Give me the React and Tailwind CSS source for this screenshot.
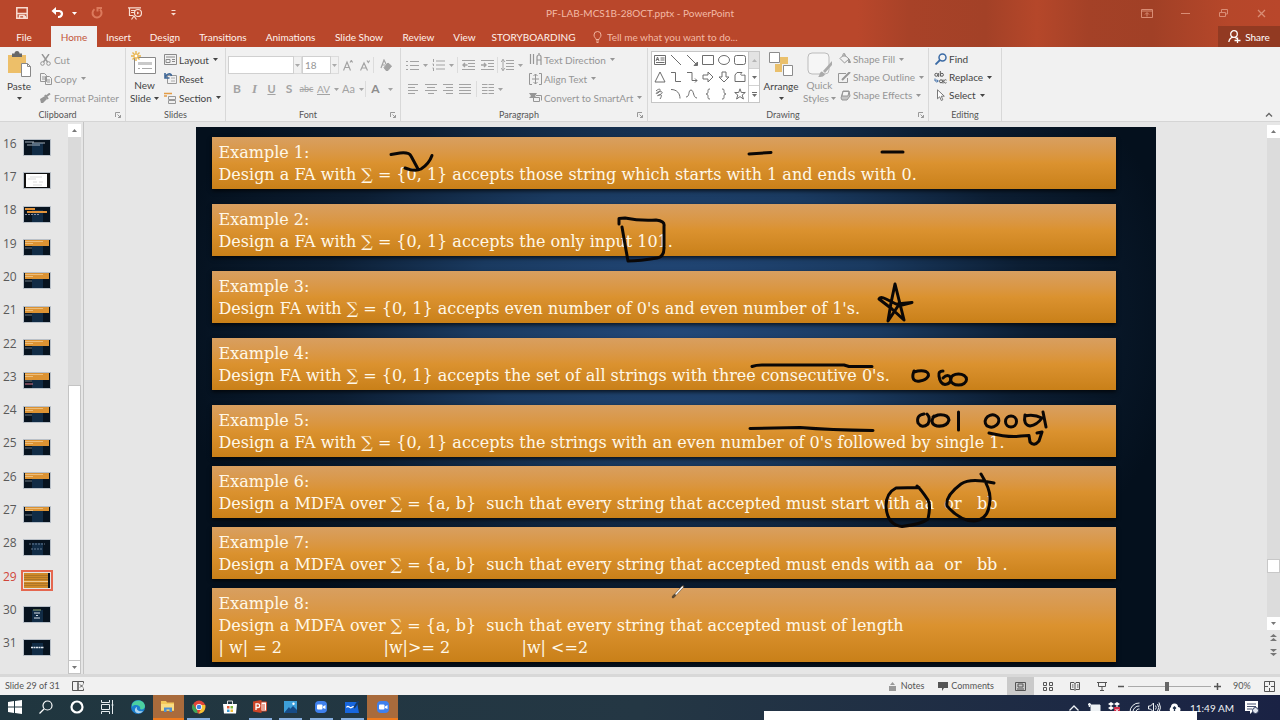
import React from "react";

const examples = [
  { gap: "", lines: ["Example 1:", "Design a FA with ∑ = {0, 1} accepts those string which starts with 1 and ends with 0."] },
  { gap: "mt-[15px]", lines: ["Example 2:", "Design a FA with ∑ = {0, 1} accepts the only input 101."] },
  { gap: "mt-[15px]", lines: ["Example 3:", "Design FA with ∑ = {0, 1} accepts even number of 0's and even number of 1's."] },
  { gap: "mt-[15px]", lines: ["Example 4:", "Design FA with ∑ = {0, 1} accepts the set of all strings with three consecutive 0's."] },
  { gap: "mt-[15px]", lines: ["Example 5:", "Design a FA with ∑ = {0, 1} accepts the strings with an even number of 0's followed by single 1."] },
  { gap: "mt-[9px]", lines: ["Example 6:", "Design a MDFA over ∑ = {a, b}  such that every string that accepted must start with aa  or   bb"] },
  { gap: "mt-[9px]", lines: ["Example 7:", "Design a MDFA over ∑ = {a, b}  such that every string that accepted must ends with aa  or   bb ."] },
  { gap: "mt-[9px]", lines: ["Example 8:", "Design a MDFA over ∑ = {a, b}  such that every string that accepted must of length"], lengths: ["| w| = 2", "|w|>= 2", "|w| <=2"] },
];

const tabs = [
  ["Insert", "w-[43px]"],
  ["Design", "w-[50px]"],
  ["Transitions", "w-[66px]"],
  ["Animations", "w-[69px]"],
  ["Slide Show", "w-[68px]"],
  ["Review", "w-[51px]"],
  ["View", "w-[41px]"],
  ["STORYBOARDING", "w-[97px]"],
];

const thumbs = [
  [16, "text"], [17, "white"], [18, "title"], [19, "band"], [20, "band"], [21, "band"], [22, "band"], [23, "tall"],
  [24, "band"], [25, "band"], [26, "band"], [27, "thin"], [28, "center"], [29, "full"], [30, "stack"], [31, "end"],
];

function Svg({ w = 14, h = 14, vb, className = "", children }) {
  return (
    <svg
      width={w}
      height={h}
      viewBox={vb || `0 0 ${w} ${h}`}
      fill="none"
      stroke="currentColor"
      strokeWidth="1"
      className={"shrink-0 " + className}
      aria-hidden="true"
    >
      {children}
    </svg>
  );
}

function Caret({ className = "" }) {
  return (
    <Svg w={5} h={3} className={className}>
      <path d="M0 0h5L2.500 3z" fill="currentColor" stroke="none" />
    </Svg>
  );
}

function Thumb({ kind }) {
  return (
    <svg width="26" height="15" viewBox="0 0 26 15" aria-hidden="true" className="block">
      <rect width="26" height="15" fill="#07131f" />
      <rect x="8" y="3" width="11" height="12" fill="#143350" opacity="0.8" />
      {kind === "text" && <path d="M1 2h9M3 5h13M8 3h13" stroke="#c9d3dc" strokeWidth="0.800" />}
      {kind === "white" && (
        <g>
          <rect width="26" height="15" fill="#111" />
          <rect x="2" y="1" width="21" height="13" fill="#fff" />
          <path d="M6 4h12M4 6h8M9 9h4M15 9h4M9 12h9" stroke="#ccc" strokeWidth="0.700" />
        </g>
      )}
      {kind === "title" && (
        <g>
          <path d="M1 2h10" stroke="#e0933b" strokeWidth="2" />
          <path d="M3 5h20" stroke="#e0933b" strokeWidth="2" />
          <path d="M1 7.500h14" stroke="#aab" strokeWidth="0.800" strokeDasharray="2 1" />
        </g>
      )}
      {(kind === "band" || kind === "tall" || kind === "thin") && (
        <g>
          <rect x="1" y="0" width="24" height={kind === "tall" ? 7 : kind === "thin" ? 4 : 6} fill="#dc9333" />
          <path d="M1 1.500h18M1 3.500h8" stroke="#f0c88e" strokeWidth="0.800" />
          <path d="M1 8h7" stroke="#aeb8c2" strokeWidth="0.600" />
          {kind === "tall" && <path d="M1 11h8" stroke="#d9778b" strokeWidth="1" />}
        </g>
      )}
      {kind === "center" && <path d="M5 4h16M7 9h12" stroke="#7d93a8" strokeWidth="0.800" strokeDasharray="2 1" />}
      {kind === "full" && (
        <g>
          <rect width="24" height="15" fill="#d08a2a" />
          <path d="M0 2.500h24M0 4.500h24M0 6.500h24M0 10.500h24M0 12.500h24" stroke="#8c6324" strokeWidth="0.500" />
          <path d="M0 8.500h24" stroke="#f5dcb0" strokeWidth="0.800" />
        </g>
      )}
      {kind === "stack" && (
        <g>
          <path d="M9 3h8" stroke="#9ab07a" strokeWidth="1" />
          <path d="M10 6h6M12 8.500h2M10 11h6" stroke="#d5dde5" strokeWidth="1" />
        </g>
      )}
      {kind === "end" && <path d="M7 7.500h13" stroke="#dfe6ee" strokeWidth="1.500" strokeDasharray="2 0.500" />}
    </svg>
  );
}

function Group({ label, width, launcher, children }) {
  return (
    <section aria-label={label} className={"flex shrink-0 flex-col border-r border-[#d8d8d8] " + width}>
      <div className="flex h-[61px] pt-[2px]">{children}</div>
      <div className="flex h-3 items-center">
        <span className="flex-1 text-center text-[9px] leading-3 text-[#555]">{label}</span>
        {launcher && (
          <button aria-label={label + " options"} className="mr-1 text-[#999]">
            <Svg w={6} h={6}><path d="M.5 5V.500H5M2.500 2.500l3 3M5.500 3v2.500H3" /></Svg>
          </button>
        )}
      </div>
    </section>
  );
}

function Row({ icon, label, dim, caret, tight }) {
  return (
    <button className={"flex items-center whitespace-nowrap " + (tight ? "h-[18px] " : "h-[19px] ") + (dim ? "text-[#969696]" : "text-[#444]")}>
      <span className="flex w-[15px] justify-center">{icon}</span>
      <span className="ml-[1px] text-[10px] leading-4">{label}</span>
      {caret && <Caret className="ml-1" />}
    </button>
  );
}

function Tool({ label, width, children }) {
  return (
    <button aria-label={label} className={"flex h-5 shrink-0 items-center justify-center gap-1 text-[#a3a3a3] " + width}>
      {children}
    </button>
  );
}

function Sep() {
  return <span className="h-4 w-px shrink-0 bg-[#dcdcdc]" />;
}

function Align({ lines }) {
  return (
    <Svg w={12} h={10}>
      {lines.map(([a, b], i) => <path key={i} d={`M${a} ${i * 3 + 0.5}H${b}`} />)}
    </Svg>
  );
}

const shapes = [
  ["Text box", <g><path d="M.5 1.500h11v9H.5zM6.500 4h4M6.500 6h4M2 8.500h8.500" /><path d="M2 7l1.500-4L5 7M2.500 5.500h2" /></g>],
  ["Line", <path d="M1 1l10 10" />],
  ["Arrow", <g><path d="M1 1l10 10" /><path d="M11.500 11.500V8l-3.500 3.500z" fill="currentColor" /></g>],
  ["Rectangle", <path d="M.5 1.500h11v9H.5z" />],
  ["Oval", <ellipse cx="6" cy="6" rx="5.500" ry="4.500" />],
  ["Rounded rectangle", <rect x=".5" y="1.500" width="11" height="9" rx="2" />],
  ["Triangle", <path d="M6 1l5 10H1z" />],
  ["Elbow connector", <path d="M1 1.500h4.500v9H11" />],
  ["Elbow arrow", <path d="M1 1.500h5v8h5M9 7.500l2 2-2 2" />],
  ["Right arrow", <path d="M1 4h5V1l5 5-5 5V8H1z" />],
  ["Down arrow", <path d="M4 1v5H1l5 5 5-5H8V1z" />],
  ["Freeform", <path d="M3 1.500h5c-3 3 0 3 3 2.500v6.500H1V4z" />],
  ["Scribble", <path d="M2 3c3-3 6-2 3 1S1 5 4 4s6 0 3 2-5 2-2 1 3 1 1 4" />],
  ["Curve", <path d="M1 1.500c6 0 9 4 9 9" />],
  ["Wave", <path d="M0 9c4 0 2-7 5-7s2 8 6 8" />],
  ["Left brace", <path d="M8 1c-2 0-2 .500-2 2.500S5 6 4 6c1 0 2 .500 2 2.500s0 2.500 2 2.500" />],
  ["Right brace", <path d="M4 1c2 0 2 .500 2 2.500S7 6 8 6c-1 0-2 .500-2 2.500s0 2.500-2 2.500" />],
  ["Star", <path d="M6 .800l1.300 3.700h4L8.200 7l1.200 4L6 8.600 2.600 11l1.200-4L.7 4.500h4z" />],
];

function TitleBar() {
  return (
    <div className="relative flex h-[26px] items-center justify-between text-[#f8ddd2]">
      <div className="flex items-center pl-4">
        <button aria-label="Save" className="flex w-[26px]">
          <Svg w={12} h={12}><path d="M.8.800h10.400v10.400H.8zM1 6.500h10M3.500 11V8.500h4.500V11" strokeWidth="1.500" /><path d="M8 9h1.500v2H8z" fill="currentColor" /></Svg>
        </button>
        <button aria-label="Undo" className="ml-[9px] flex items-center gap-2 text-white">
          <Svg w={13} h={12}><path d="M5 0v3h3.500C14 3.500 13 11.500 7 11V9c3 .300 4-3.500 1-4H5v3L.5 4z" fill="currentColor" stroke="none" /></Svg>
          <Caret />
        </button>
        <button aria-label="Redo" className="ml-[14px] flex text-[#dc7a5c]">
          <Svg w={12} h={12}><path d="M3.500 2.200A4.500 4.500 0 1 0 9 2.500M6.500 4.500V1H11" strokeWidth="2" /></Svg>
        </button>
        <button aria-label="Start slide show" className="ml-[25px] flex">
          <Svg w={14} h={13}><path d="M0 .8h13M1.500 1v7.500h4M3 3.500h4M3 5.500h3M6 9l-2.500 3.500M6 9l2.500 3.500" strokeWidth="1.200" /><circle cx="10" cy="6" r="3.500" strokeWidth="1.200" /><path d="M9 4.500v3L11.500 6z" fill="currentColor" stroke="none" /></Svg>
        </button>
        <button aria-label="Customize quick access toolbar" className="ml-[29px] flex">
          <Svg w={5} h={6}><path d="M.5.500h4" /><path d="M0 3h5L2.500 5.500z" fill="currentColor" stroke="none" /></Svg>
        </button>
      </div>
      <h1 className="absolute left-1/2 -translate-x-1/2 whitespace-nowrap text-[10px] leading-4 text-[#f3baa6]">
        PF-LAB-MCS1B-28OCT.pptx - PowerPoint
      </h1>
      <div className="flex w-[152px] text-[#d98d75]">
        <button aria-label="Ribbon display options" className="flex w-[38px] justify-center"><Svg w={12} h={9}><path d="M.5.500h11v8H.5zM.5 2h11M6 7.500V4M4 5.500l2-2 2 2" /></Svg></button>
        <button aria-label="Minimize" className="flex w-[38px] items-center justify-center"><Svg w={9} h={3}><path d="M0 1.500h9" /></Svg></button>
        <button aria-label="Restore" className="flex w-[38px] justify-center"><Svg w={9} h={9}><path d="M.5 3.500h6v4h-6zM2.500 3V.500h6V5H7" /></Svg></button>
        <button aria-label="Close" className="flex w-[38px] justify-center"><Svg w={9} h={9}><path d="M1 1l7 7M8 1L1 8" strokeWidth="1.300" /></Svg></button>
      </div>
    </div>
  );
}

function TabBar() {
  return (
    <nav aria-label="Ribbon tabs" className="flex h-[21px] items-stretch text-[10px] leading-4 text-[#fff3ed]">
      <button className="w-12">File</button>
      <button className="ml-[3px] w-[46px] bg-[#f1f1f1] text-[#c2563a]">Home</button>
      {tabs.map(([t, w]) => <button key={t} className={"whitespace-nowrap text-center " + w}>{t}</button>)}
      <label className="ml-[11px] flex flex-1 items-center gap-[5px]">
        <Svg w={9} h={12} className="text-[#f0b39d]"><path d="M3 8.500C3 7 1 6.500 1 4a3.500 3.500 0 0 1 7 0c0 2.500-2 3-2 4.500zM3 10h3M3.500 11.500h2" /></Svg>
        <input aria-label="Tell me what you want to do" placeholder="Tell me what you want to do..." className="w-44 bg-transparent text-[10px] leading-4 outline-none placeholder:text-[#f3baa6]" />
      </label>
      <button className="flex w-[62px] items-center justify-center gap-1 bg-[#923a22] text-white">
        <Svg w={13} h={13}><circle cx="6" cy="4" r="3.300" strokeWidth="1.300" /><path d="M.8 12c.500-3 2-4.500 4-4.700M7 7.500l2 1M6.500 10.500h6M9.500 7.500v5.500" strokeWidth="1.300" /></Svg>
        Share
      </button>
    </nav>
  );
}

function Ribbon() {
  return (
    <div className="flex h-[75px] items-stretch border-b border-[#d5d5d5] bg-[#f1f1f1] pt-px">
      <Group label="Clipboard" width="w-[126px]" launcher>
        <button className="flex w-[38px] shrink-0 flex-col items-center text-[10px] leading-3 text-[#444]">
          <Svg w={25} h={27} className="mt-[1px]">
            <path d="M1 4h18v18H1z" fill="#edbf69" stroke="none" />
            <path d="M5 2.500h2.500a2.500 2.500 0 0 1 5 0H15V6H5z" fill="#686868" stroke="none" />
            <path d="M14.500 12.500h6l3 3v10h-9z" fill="#fff" stroke="#888" /><path d="M20.500 12.500v3h3" stroke="#888" />
          </Svg>
          <span className="mt-[2px]">Paste</span>
          <Caret className="mt-[5px]" />
        </button>
        <div className="flex flex-col">
          <Row dim label="Cut" icon={<Svg w={11} h={12}><path d="M2 0l5.500 8M9 0L3.500 8" strokeWidth="1.400" /><circle cx="2.500" cy="9.500" r="1.800" /><circle cx="8.500" cy="9.500" r="1.800" /></Svg>} />
          <Row dim caret label="Copy" icon={<Svg w={12} h={12}><path d="M.5.500h4l2 2v6h-6zM5.500 3.500h4l2 2v6h-6zM2 4h3M2 6h3M7 7h3M7 9h3" /></Svg>} />
          <Row dim label="Format Painter" icon={<Svg w={11} h={10}><path d="M0 6l5-3 2 3-4 4H1z" fill="currentColor" stroke="none" /><path d="M6 3.500L10 .5M5 2l3 4" strokeWidth="2" /></Svg>} />
        </div>
      </Group>
      <Group label="Slides" width="w-[100px]">
        <button className="flex w-[37px] shrink-0 flex-col items-center whitespace-nowrap text-[10px] leading-[13px] text-[#444]">
          <Svg w={27} h={26} className="mt-[1px]">
            <path d="M3.500 6.500h21v16h-21z" fill="#fff" stroke="#888" />
            <path d="M7 11h14v3H7z" fill="#c9c9c9" stroke="none" /><path d="M7 17.500h2M11 17.500h10" stroke="#aaa" />
            <path d="M5 0v10M0 5h10M1.500 1.500l7 7M8.500 1.500l-7 7" stroke="#e9b44c" strokeWidth="1.400" /><circle cx="5" cy="5" r="2" fill="#fff" stroke="#e9b44c" />
          </Svg>
          <span className="mt-[2px]">New</span>
          <span className="flex items-center gap-[3px]">Slide <Caret /></span>
        </button>
        <div className="flex flex-col">
          <Row caret label="Layout" icon={<Svg w={13} h={11} className="text-[#8a8a8a]"><path d="M.5.500h12v10H.5zM2 3h9M2 5.500h4v3H2zM8 5.500h3M8 7.500h3" /></Svg>} />
          <Row label="Reset" icon={<Svg w={13} h={12}><path d="M3.500 2.500h9v8h-9z" stroke="#999" /><path d="M7 5h4M7 8h4" stroke="#aaa" /><path d="M1 0v5h4.500M1.500 4.500C2.500 0 7 0 7.500 3" stroke="#3f6797" strokeWidth="1.600" /></Svg>} />
          <Row caret label="Section" icon={<Svg w={13} h={12}><path d="M0 1.500h8M0 4h3" stroke="#e39c45" strokeWidth="1.600" /><path d="M4.500 4.500h7v3h-7zM4.500 8.500h7v3h-7z" stroke="#999" /></Svg>} />
        </div>
      </Group>
      <Group label="Font" width="w-[175px]" launcher>
        <div className="flex flex-col gap-1 pl-[2px] pt-[5px]">
          <div className="flex items-center">
            <input aria-label="Font name" className="h-[18px] w-[66px] border border-[#d0d0d0] bg-white px-1 text-[10px]" />
            <span className="flex h-[18px] w-2 items-center justify-center border-y border-r border-[#dcdcdc] text-[#aaa]"><Caret /></span>
            <select aria-label="Font size" defaultValue="18" className="h-[18px] w-[29px] appearance-none border border-[#d0d0d0] bg-white pl-[2px] text-[10px] leading-4 text-[#969696]"><option>18</option></select>
            <span className="flex h-[18px] w-2 items-center justify-center border-y border-r border-[#dcdcdc] text-[#aaa]"><Caret /></span>
            <Tool label="Increase font size" width="w-[18px]"><Svg w={10} h={11}><path d="M.5 10.500L4 2l3.500 8.500M2 7.500h4M7 2.500l1.300-2 1.300 2" strokeWidth="1.200" /></Svg></Tool>
            <Tool label="Decrease font size" width="w-[16px]"><Svg w={10} h={11}><path d="M.5 10.500L4 3l3.500 7.500M2 8h4M7 .5l1.300 2 1.300-2" strokeWidth="1.200" /></Svg></Tool>
            <Sep />
            <Tool label="Clear formatting" width="w-6"><Svg w={12} h={12}><path d="M1 9L4 1l3 6M2 6h3" strokeWidth="1.200" /><path d="M4 8.500L8 4l3.500 3L8 11.500H6z" fill="currentColor" /></Svg></Tool>
          </div>
          <div className="flex items-center text-[11px] leading-4">
            <Tool label="Bold" width="w-[18px]"><b className="text-[12px]">B</b></Tool>
            <Tool label="Italic" width="w-[17px]"><i className="font-['Liberation_Serif',serif] text-[13px] font-bold">I</i></Tool>
            <Tool label="Underline" width="w-[17px]"><u className="font-bold">U</u></Tool>
            <Tool label="Shadow" width="w-[18px]"><b className="text-[12px]">S</b></Tool>
            <Tool label="Strikethrough" width="w-[17px]"><s className="text-[9px]">abc</s></Tool>
            <Tool label="Character spacing" width="w-[26px]"><u className="text-[10px]">AV</u><Caret /></Tool>
            <Tool label="Change case" width="w-6"><span className="text-[11px]">Aa</span><Caret /></Tool>
            <Sep />
            <Tool label="Font color" width="w-[32px]"><b className="text-[12px] text-[#8d8d8d]">A</b><Caret className="ml-1" /></Tool>
          </div>
        </div>
      </Group>
      <Group label="Paragraph" width="w-[247px]" launcher>
        <div className="flex w-[127px] shrink-0 flex-col gap-1 pl-[3px] pt-[5px]">
          <div className="flex items-center gap-px">
            <Tool label="Bullets" width="w-[25px]"><Svg w={13} h={11}><path d="M4 1.500h9M4 5.500h9M4 9.500h9M0 1.500h2M0 5.500h2M0 9.500h2" /></Svg><Caret /></Tool>
            <Tool label="Numbering" width="w-[26px]"><Svg w={13} h={12}><path d="M4 2h9M4 6h9M4 10h9M1.500 0v3M.5 5h1v2M.5 9h1v3" /></Svg><Caret /></Tool>
            <Sep />
            <Tool label="Decrease indent" width="w-[19px]"><Svg w={13} h={11}><path d="M0 .5h13M6 3.500h7M6 6.500h7M0 9.500h13" /><path d="M5.500 5H1M3 3L1 5l2 2" strokeWidth="1.400" /></Svg></Tool>
            <Tool label="Increase indent" width="w-[17px]"><Svg w={13} h={11}><path d="M0 .5h13M7 3.500h6M7 6.500h6M0 9.500h13" /><path d="M0 5h5M3 3l2 2-2 2" strokeWidth="1.400" /></Svg></Tool>
            <Sep />
            <Tool label="Line spacing" width="w-[26px]"><Svg w={13} h={12}><path d="M5 1.500h8M5 4.500h8M5 7.500h8M5 10.500h8M2 0v12M0 3l2-2.500L4 3M0 9l2 2.500L4 9" /></Svg><Caret /></Tool>
          </div>
          <div className="flex items-center">
            <Tool label="Align left" width="w-[18px]"><Align lines={[[1, 11], [1, 8], [1, 11], [1, 8]]} /></Tool>
            <Tool label="Center" width="w-[17px]"><Align lines={[[0, 12], [2, 10], [0, 12], [3, 9]]} /></Tool>
            <Tool label="Align right" width="w-[17px]"><Align lines={[[1, 11], [4, 11], [1, 11], [4, 11]]} /></Tool>
            <Tool label="Justify" width="w-[18px]"><Align lines={[[0, 12], [0, 12], [0, 12], [0, 12]]} /></Tool>
            <span className="ml-[2px] flex"><Sep /></span>
            <Tool label="Columns" width="w-[30px]"><Svg w={12} h={10}><path d="M0 .5h5.500M6.500.500H12M0 3.500h5.500M6.500 3.500H12M0 6.500h5.500M6.500 6.500H12M0 9.500h5.500M6.500 9.500H12" /></Svg><Caret /></Tool>
          </div>
        </div>
        <div className="flex flex-col">
          <Row dim caret label="Text Direction" icon={<Svg w={13} h={13}><path d="M1.500 1v10M4.500 1v10M8 12V4a2 2 0 0 1 4 0v8M8 7h4M10 2V0" strokeWidth="1.200" /></Svg>} />
          <Row dim caret label="Align Text" icon={<Svg w={13} h={12}><path d="M3 .5H.5v11H3M10 .5h2.500v11H10M6.500 1v10M4.500 3l2-2 2 2M4.500 9l2 2 2-2M3 6h7" /></Svg>} />
          <Row dim caret label="Convert to SmartArt" icon={<Svg w={13} h={11}><path d="M0 1h8l-2 3 2 2H0l2-2z" fill="currentColor" stroke="none" /><path d="M4.500 5.500h6v4h-6zM7 3.500h5.500v5" /></Svg>} />
        </div>
      </Group>
      <Group label="Drawing" width="w-[281px]" launcher>
        <div className="ml-[3px] mt-[1px] flex h-[52px] shrink-0 border border-[#c6c6c6] bg-white text-[#6d6d6d]">
          <div className="grid w-24 grid-cols-6">
            {shapes.map(([name, d]) => (
              <button key={name} aria-label={name} className="flex items-center justify-center"><Svg w={12} h={12}>{d}</Svg></button>
            ))}
          </div>
          <div className="flex w-[11px] flex-col border-l border-[#c6c6c6]">
            <button aria-label="Previous shapes" className="flex flex-1 items-center justify-center bg-[#e3e3e3] text-[#b5b5b5]"><Caret className="rotate-180" /></button>
            <button aria-label="Next shapes" className="flex flex-1 items-center justify-center border-y border-[#d2d2d2]"><Caret /></button>
            <button aria-label="More shapes" className="flex flex-1 items-center justify-center"><Svg w={5} h={5}><path d="M0 .5h5" /><path d="M0 2h5L2.500 5z" fill="currentColor" stroke="none" /></Svg></button>
          </div>
        </div>
        <button className="flex w-[42px] shrink-0 flex-col items-center text-[10px] leading-3 text-[#444]">
          <Svg w={25} h={25} className="mt-[2px]">
            <path d="M11 5h8v7h-8zM6 12h7v8H6z" fill="#eac06c" stroke="none" />
            <path d="M.5.500h10v10H.5zM14.500 13.500h9v10h-9z" fill="#fff" stroke="#8c8c8c" />
          </Svg>
          <span className="mt-[3px]">Arrange</span>
          <Caret className="mt-[5px]" />
        </button>
        <button className="flex w-[35px] shrink-0 flex-col items-center whitespace-nowrap text-[10px] leading-[13px] text-[#969696]">
          <Svg w={26} h={26} className="mt-[2px]">
            <rect x="1" y="1" width="21" height="21" rx="4" stroke="#bbb" fill="#f6f6f6" />
            <path d="M25 9v4l-7 8-2-2z" fill="#aaa" stroke="none" /><path d="M15 19.500l3 2.500c-1 3-4 3-7 3 2-1 1-5 4-5.500z" fill="#aaa" stroke="none" />
          </Svg>
          <span className="mt-px">Quick</span>
          <span className="flex items-center gap-[2px]">Styles <Caret /></span>
        </button>
        <div className="flex flex-col">
          <Row tight dim caret label="Shape Fill" icon={<Svg w={12} h={12}><path d="M5 1.500l5 4.500-4.500 4L1 5.500zM4 4V1.500a1 1 0 0 1 2 0V4" /><path d="M10 6l1.500 3.500h-2z" fill="currentColor" /></Svg>} />
          <Row tight dim caret label="Shape Outline" icon={<Svg w={13} h={11}><path d="M8 1.500H.5v9h9V6" /><path d="M12 0L4 8" strokeWidth="2" /></Svg>} />
          <Row tight dim caret label="Shape Effects" icon={<Svg w={12} h={11}><path d="M2 8l2-7h6l1 5-3 4H3z" fill="#c4c4c4" /><path d="M4 1.500h6L9 6H3z" fill="#f5f5f5" /></Svg>} />
        </div>
      </Group>
      <Group label="Editing" width="w-[73px]">
        <div className="flex flex-col pl-1">
          <Row tight label="Find" icon={<Svg w={12} h={12} className="text-[#3b6ba5]"><circle cx="7.500" cy="4.500" r="3.500" strokeWidth="1.500" /><path d="M5 7l-4.500 4.500" strokeWidth="1.800" /></Svg>} />
          <Row
            tight
            caret
            label="Replace"
            icon={
              <Svg w={13} h={13} className="text-[#5a5a5a]">
                <circle cx="2.300" cy="3.800" r="1.500" /><path d="M4.300 2v4M6.300 0v5.500" /><circle cx="7.900" cy="3.800" r="1.500" />
                <circle cx="7" cy="10.300" r="1.500" /><path d="M9 8.500v4M12.500 9.200a1.600 1.600 0 1 0 0 2.400" />
                <path d="M1 7.500v2.500h3M2.800 8.500L4.300 10l-1.500 1.500" stroke="#3b6ba5" />
              </Svg>
            }
          />
          <Row tight caret label="Select" icon={<Svg w={8} h={12} className="text-[#777]"><path d="M.5.800v9l2.200-2 1.600 3.700 1.500-.700L4.300 7.200h3z" fill="#fff" /></Svg>} />
        </div>
      </Group>
      <div className="flex flex-1 items-end justify-end pb-1 pr-[7px] text-[#666]">
        <button aria-label="Collapse the ribbon"><Svg w={8} h={5}><path d="M1 4.500l3-3 3 3" strokeWidth="1.400" /></Svg></button>
      </div>
    </div>
  );
}

function ThumbnailPane() {
  return (
    <aside aria-label="Slides" className="flex w-[84px] shrink-0 border-r border-[#c4c4c4]">
      <ol className="flex flex-1 flex-col pb-[10px] pt-[9px]">
        {thumbs.map(([n, kind]) => (
          <li key={n} className="flex flex-1">
            <button aria-label={"Slide " + n} className="flex items-center pl-[3px]">
              <span className={"w-[18px] pb-2 text-left font-['Open_Sans',sans-serif] text-[12px] leading-4 " + (n === 29 ? "text-[#d0453a]" : "text-[#5a5a5a]")}>{n}</span>
              <span className={n === 29 ? "border-2 border-[#e5674f] p-px" : "m-[2px] border border-[#b9c0c8]"}><Thumb kind={kind} /></span>
            </button>
          </li>
        ))}
      </ol>
      <div className="mr-[2px] mt-[2px] flex w-[13px] flex-col bg-[#dadada] text-[#777]">
        <button aria-label="Scroll slides up" className="flex h-[13px] items-center justify-center bg-white"><Caret className="rotate-180" /></button>
        <div className="flex-[250]" />
        <div className="flex-[276] border border-[#c4c4c4] bg-white" />
        <button aria-label="Scroll slides down" className="flex h-[13px] items-center justify-center border-x border-b border-[#c4c4c4] bg-white"><Caret /></button>
      </div>
    </aside>
  );
}

function Ink() {
  return (
    <svg viewBox="196 127 960 540" fill="none" stroke="#0a0706" strokeWidth="3" strokeLinecap="round" strokeLinejoin="round" className="pointer-events-none absolute inset-0 h-full w-full" aria-hidden="true">
      <path d="M391 154.500L400 153Q409 152 411 156L418 169M405 168Q415 172 421 169Q429 164 432 155.500" />
      <path d="M619 224V218.500L625 218Q640 221 656 220Q665 221 664 226V248Q664 257 657 258Q640 261 628 261L626 250L622 227" />
      <path d="M749 154L771 152.500M882 152H903" />
      <path d="M895 284L900 304L904 320L892 309L879 299Q880 296 886 299L896 304L912 302.500L898 306L888 321L891 303Z" />
      <path d="M752 366.500Q756 365 762 365H844L849 366.500H872" />
      <path d="M914 371C911 379 914 382 920 381C928 380 931 374 926 371.500Q921 370 914 372M943 371Q938 371 939 376Q940 384 945 384.500Q951 384 951 378Q948 373 943 378" />
      <ellipse cx="958.500" cy="379.500" rx="8" ry="5.500" />
      <path d="M750 428.500L800 427.500Q830 430 873 430.500" />
      <path d="M924 414Q916 415 918 423Q922 429 928 424Q931 418 927 414M934 416Q929 424 937 426Q947 427 949 420Q948 414 938 415L933 417M958.500 412V430" />
      <ellipse cx="992" cy="421" rx="7" ry="6" transform="rotate(-20 992 421)" />
      <ellipse cx="1011" cy="421.500" rx="5.500" ry="5.500" />
      <path d="M1025 415Q1023 425 1030 426Q1037 425 1042 418Q1034 414 1025 416M1043 412L1046 427" />
      <path d="M989 433Q1010 438 1021 436L1029 435.500L1030 442Q1034 447 1039 441L1042 432L1037 433" />
      <path d="M919 487.500L896 488Q886 493 886 506Q887 525 902 526.500Q922 524 928 519Q931 505 928 500Q920 488 917 486" />
      <path d="M994 483L983 481Q968 479 961 484Q945 496 947 506Q960 521 974 521Q989 520 990 500Q991 490 981 474" />
      <path d="M683 586.500L675 595L673 597" stroke="#5b4a35" strokeWidth="2.500" />
      <path d="M682.500 587L676 594" stroke="#fff" strokeWidth="1.500" />
    </svg>
  );
}

function Slide() {
  return (
    <article className="relative w-full max-w-[960px] bg-[#051020] bg-[radial-gradient(ellipse_at_50%_35%,#23497a_0%,#1a3a60_30%,#0c1e33_52%,#04101d_75%)] pb-[5px] pl-4 pr-10 pt-[10px]">
      {examples.map((e) => (
        <section key={e.lines[0]} className={"whitespace-pre bg-linear-to-b from-[#d89f60] via-[#db922f] to-[#c98018] px-[7px] pb-[3px] pt-[5px] font-['DejaVu_Serif',serif] text-[16px] leading-[22px] text-[#fff8e8] shadow-[0_2px_4px_rgba(0,0,0,0.7)] " + e.gap}>
          {e.lines.map((l) => <p key={l}>{l}</p>)}
          {e.lengths && (
            <p className="flex">
              {e.lengths.map((l, i) => <span key={l} className={i === 0 ? "w-[165px]" : "w-[138px]"}>{l}</span>)}
            </p>
          )}
        </section>
      ))}
      <Ink />
    </article>
  );
}

function SlideScroll() {
  return (
    <div className="mt-[3px] flex w-[13px] shrink-0 flex-col bg-[#dcdcdc] text-[#777]">
      <button aria-label="Scroll up" className="flex h-[13px] items-center justify-center bg-white"><Caret className="rotate-180" /></button>
      <div className="flex-[424]" />
      <div className="h-[14px] border border-[#c8c8c8] bg-white" />
      <div className="flex-[44]" />
      <button aria-label="Scroll down" className="flex h-[13px] items-center justify-center bg-white"><Caret /></button>
      <div className="flex h-11 flex-col items-center gap-2 bg-[#e6e6e6] pt-1">
        <button aria-label="Previous slide"><Svg w={7} h={7}><path d="M0 3h7L3.500 0zM0 7h7L3.500 4z" fill="currentColor" stroke="none" /></Svg></button>
        <button aria-label="Next slide"><Svg w={7} h={7}><path d="M0 0h7L3.500 3zM0 4h7L3.500 7z" fill="currentColor" stroke="none" /></Svg></button>
      </div>
    </div>
  );
}

function StatusBar() {
  return (
    <footer className="flex h-[18px] shrink-0 items-center justify-between bg-[#f1f1f1] text-[9px] leading-4 text-[#555]">
      <div className="flex items-center gap-3 pl-[5px]">
        <span>Slide 29 of 31</span>
        <button aria-label="Spelling check"><Svg w={12} h={10}><path d="M6 1.500v8M.5.500H6v9H.5zM6 .5h5.500v2M6 9.500h5.500v-2M8 3.500l3 3M11 3.500l-3 3" /></Svg></button>
      </div>
      <div className="flex items-center self-stretch">
        <button className="flex items-center gap-1"><Svg w={9} h={9} className="text-[#999]"><path d="M1 4h7v5H1zM4.500 0L7 3H2z" fill="currentColor" stroke="none" /></Svg>Notes</button>
        <button className="ml-[14px] flex items-center gap-[3px]"><Svg w={10} h={9}><path d="M0 0h10v6H6L4 9V6H0z" fill="currentColor" stroke="none" /></Svg>Comments</button>
        <button aria-label="Normal view" className="ml-[13px] flex w-[27px] items-center justify-center self-stretch bg-[#cacaca]"><Svg w={11} h={9}><path d="M.5.500h10v8H.5zM3 2h5v3H3zM2 7h7" /></Svg></button>
        <button aria-label="Slide sorter" className="flex w-[27px] justify-center"><Svg w={10} h={9}><path d="M.5.500h3v3h-3zM6.500.500h3v3h-3zM.5 5.500h3v3h-3zM6.500 5.500h3v3h-3z" /></Svg></button>
        <button aria-label="Reading view" className="flex w-[27px] justify-center"><Svg w={10} h={9}><path d="M.5.500h3.500l1 1 1-1h3.500v7H6l-1 1-1-1H.5zM5 1v7M2 3h1.500M2 5h1.500M7 3h1.500M7 5h1.500" /></Svg></button>
        <button aria-label="Slide show" className="flex w-[27px] justify-center"><Svg w={10} h={9}><path d="M0 .5h10M1.500.500v4h7v-4M5 5v3M3 8.500h4" /></Svg></button>
        <button aria-label="Zoom out" className="ml-[3px]"><Svg w={6} h={7}><path d="M0 3.500h6" strokeWidth="1.500" /></Svg></button>
        <input type="range" aria-label="Zoom" min="10" max="170" defaultValue="84" className="ml-1 h-3 w-[83px] appearance-none bg-[linear-gradient(#aaa,#aaa)] bg-[length:100%_1px] bg-center bg-no-repeat [&::-webkit-slider-thumb]:h-[9px] [&::-webkit-slider-thumb]:w-1 [&::-webkit-slider-thumb]:appearance-none [&::-webkit-slider-thumb]:bg-[#666]" />
        <button aria-label="Zoom in" className="ml-[3px]"><Svg w={7} h={7}><path d="M0 3.500h7M3.500 0v7" strokeWidth="1.500" /></Svg></button>
        <span className="ml-3 w-[31px]">90%</span>
        <button aria-label="Fit slide to window" className="mr-[5px]"><Svg w={11} h={11}><path d="M.5.500h10v10H.5zM5.500 0v4M5.500 7v4M0 5.500h4M7 5.500h4" /></Svg></button>
      </div>
    </footer>
  );
}

const zoomIcon = (
  <Svg w={14} h={14}><rect x="1" y="1" width="12" height="12" rx="4" fill="#3f80ed" stroke="none" /><rect x="3" y="4.500" width="5.500" height="5" rx="1" fill="#fff" stroke="none" /><path d="M9 6.500l2.500-1.500v4L9 8z" fill="#fff" stroke="none" /></Svg>
);

const apps = [
  ["Start", "none", <Svg w={14} h={14}><path d="M0 2l6-1v5.500H0zM7 .900L14 0v6.500H7zM0 7.500h6V13l-6-1zM7 7.500h7V14l-7-1z" fill="#fff" stroke="none" /></Svg>],
  ["Search", "none", <Svg w={14} h={14}><circle cx="8.500" cy="5.500" r="4.500" stroke="#fff" strokeWidth="1.200" /><path d="M5 9L.5 13.500" stroke="#fff" strokeWidth="1.200" /></Svg>],
  ["Cortana", "none", <Svg w={14} h={14}><circle cx="7" cy="7" r="5.500" stroke="#fff" strokeWidth="2.200" /></Svg>],
  ["Task view", "none", <Svg w={14} h={14}><path d="M1.500 0v2.500h8V0M1.500 14v-2.500h8V14M1.500 4.500h8v5h-8zM12.500 0v14M11.500 5h2" stroke="#e6ecef" /></Svg>],
  ["Edge", "none", <Svg w={14} h={14}><circle cx="7" cy="7" r="7" fill="#1b7fd0" stroke="none" /><path d="M1 4.500C3-1 13-1 14 6c0 3-3 4-5 3 1-2-1-4-4-4-2 0-3 .500-4 2z" fill="#4bd0a0" stroke="none" /><path d="M6 7c-1 3 2 5 6 4-2 3-7 3-8 0-.500-2 .500-3.500 2-4z" fill="#cfe9f5" stroke="none" opacity=".8" /></Svg>],
  ["File Explorer", "orange", <Svg w={14} h={13}><path d="M0 1h5l1 1.500h7V11H0z" fill="#f5c95a" stroke="none" /><path d="M0 4h13v6H0z" fill="#fbdc82" stroke="none" /><path d="M3 12V7.500h8V12H8.500V9.500h-3V12z" fill="#4f8fd0" stroke="none" /></Svg>],
  ["Chrome", "blue", <Svg w={14} h={14}><circle cx="7" cy="7" r="6.500" fill="#e2463a" stroke="none" /><path d="M1 4l4 6-1 3A6.500 6.500 0 0 1 1 4z" fill="#3fa457" stroke="none" /><path d="M1 4l5 8.500L4 13c-4-2-4-6-3-9z" fill="#3fa457" stroke="none" /><path d="M7 5h6.200C14 10 11 14 6.500 13.500L10 8z" fill="#f4c534" stroke="none" /><circle cx="7" cy="7" r="3.100" fill="#fff" stroke="none" /><circle cx="7" cy="7" r="2.300" fill="#4281e0" stroke="none" /></Svg>],
  ["Microsoft Store", "none", <Svg w={14} h={14}><path d="M4.500 4V1h5v3" stroke="#ddd" /><path d="M0 4h14l-1 9.500H1z" fill="#fff" stroke="none" /><path d="M4 6h2.500v2.500H4z" fill="#e35a35" stroke="none" /><path d="M7.500 6H10v2.500H7.500z" fill="#7db63d" stroke="none" /><path d="M4 9.500h2.500V12H4z" fill="#3c9fd8" stroke="none" /><path d="M7.500 9.500H10V12H7.500z" fill="#efbd38" stroke="none" /></Svg>],
  ["PowerPoint", "blue", <Svg w={14} h={13}><path d="M7 2h6.500v9H7z" fill="#fff" stroke="#d14b2e" /><path d="M9 5h3M9 7h3M9 9h3" stroke="#d14b2e" /><path d="M0 1.500L8.500 0v13L0 11.500z" fill="#cc4427" stroke="none" /><path d="M3 10V3.800h1.800a1.700 1.700 0 0 1 0 3.700H3" stroke="#fff" strokeWidth="1.300" /></Svg>],
  ["Photos", "blue", <Svg w={14} h={12}><path d="M0 0h13v12H0z" fill="#3d9fd8" stroke="none" /><path d="M0 12l5-6 4 6zM6 8l3-3 4 4v3H8z" fill="#164b86" stroke="none" /><circle cx="9.500" cy="2.800" r="1.200" fill="#fff" stroke="none" /></Svg>],
  ["Zoom", "blue", zoomIcon],
  ["Whiteboard", "blue", <Svg w={14} h={12}><path d="M0 1h12l2 11H0z" fill="#1766dd" stroke="none" /><path d="M1.500 6.500c2-3 3 1.500 5 0s2-1 3 0" stroke="#fff" strokeWidth="1.300" /><path d="M13.500 0L9 7" stroke="#153a6b" strokeWidth="2" /></Svg>],
  ["Zoom Meeting", "orange", zoomIcon],
];

function Taskbar() {
  return (
    <footer className="relative flex h-[25px] shrink-0 items-stretch justify-between bg-linear-to-r from-[#20363f] via-[#243744] to-[#1a2244] text-[#eef2f5]">
      <div className="flex w-[398px]">
        {apps.map(([name, mark, icon]) => (
          <button key={name} aria-label={name} className={"flex flex-1 flex-col items-center justify-between " + (mark === "orange" ? "bg-[#a96b3c]" : "")}>
            <span className="flex h-[23px] items-center">{icon}</span>
            <span className={"h-[2px] " + (mark === "orange" ? "w-full bg-[#f07a1c]" : mark === "blue" ? "w-[23px] bg-[#86aede]" : "w-0")} />
          </button>
        ))}
      </div>
      <div className="flex items-center text-[10px] leading-4">
        <button aria-label="Show hidden icons" className="flex w-5 justify-center"><Svg w={10} h={6}><path d="M.5 5.500L5 1l4.500 4.500" strokeWidth="1.300" /></Svg></button>
        <button aria-label="Battery" className="flex w-5 justify-center"><Svg w={13} h={9}><path d="M3 2h9v6H3z" fill="currentColor" /><path d="M0 1.500h3M1.500 0v4" strokeWidth="1.500" /></Svg></button>
        <button aria-label="Dropbox" className="flex w-5 justify-center"><Svg w={12} h={12}><path d="M3 0l3 2-3 2-3-2zM9 0l3 2-3 2-3-2zM3 4l3 2-3 2-3-2zM9 4l3 2-3 2-3-2z" fill="#fff" stroke="none" /><path d="M6 5h6v7H6z" fill="#d1304b" stroke="none" /><path d="M7.500 7l3 3M10.500 7l-3 3" stroke="#fff" /></Svg></button>
        <button aria-label="Wi-Fi" className="flex w-5 justify-center"><Svg w={11} h={11}><path d="M1 10.500A9 9 0 0 1 10.500 1M4 10.500A6 6 0 0 1 10.500 4M7 10.500A3 3 0 0 1 10.500 7" /></Svg></button>
        <button aria-label="Volume" className="flex w-5 justify-center"><Svg w={13} h={11}><path d="M.5 4v3h2l3 3V1l-3 3zM7.500 3.500q1.500 2 0 4M9.500 2q2.500 3.500 0 7M11 .5q3 5 0 10" /></Svg></button>
        <button aria-label="Cloud sync" className="flex w-5 justify-center"><Svg w={13} h={9}><path d="M3 9a3 3 0 0 1 0-5 3.500 3.500 0 0 1 7 0 2.500 2.500 0 0 1 0 5z" fill="#fff" stroke="none" /><path d="M6.500 8V4M5 5.500L6.500 4 8 5.500" stroke="#20304a" strokeWidth="1.300" /></Svg></button>
        <time className="ml-[6px] w-[55px] whitespace-nowrap">11:49 AM</time>
        <button aria-label="Notifications" className="mr-[21px]"><Svg w={14} h={13}><path d="M0 0h13v10H8l-3 3v-3H0z" fill="#fff" stroke="none" /><path d="M2 3h9M2 5.500h9M2 8h5" stroke="#465170" /><circle cx="10.500" cy="9.500" r="3" fill="#dfe4ee" stroke="#2a3658" /></Svg></button>
      </div>
      <div className="absolute bottom-0 right-[83px] h-[9px] w-[433px] bg-white" />
    </footer>
  );
}

export default function App() {
  return (
    <div className="flex min-h-screen flex-col bg-[#e6e6e6] font-['Lato','Open_Sans',sans-serif] text-[#444]">
      <header>
        <div className="bg-[#b9472b] bg-[linear-gradient(90deg,#b9472b_0%,#b9472b_67%,#a84228_71%,#a34127_77%,#b5472a_81%,#a44127_85%,#a14026_90%,#b6472a_96%,#b9472b_100%)]">
          <TitleBar />
          <TabBar />
        </div>
        <Ribbon />
      </header>
      <main className="flex flex-1 items-stretch border-b-[3px] border-[#d8d8d8]">
        <ThumbnailPane />
        <div className="flex flex-1 items-start justify-center pb-[7px] pt-[5px]"><Slide /></div>
        <SlideScroll />
      </main>
      <StatusBar />
      <Taskbar />
    </div>
  );
}
